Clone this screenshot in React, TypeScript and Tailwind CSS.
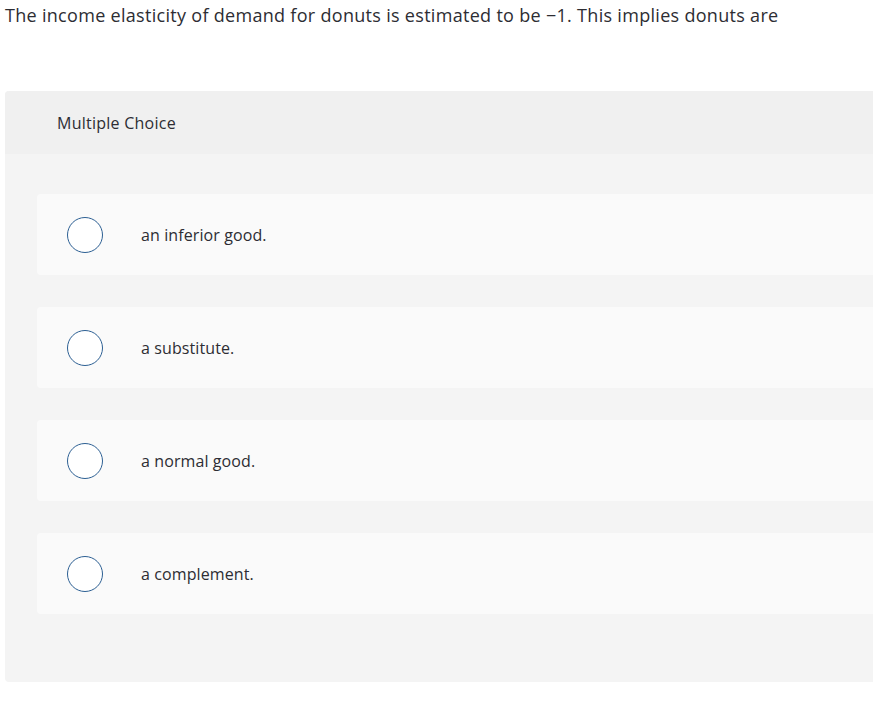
import React from "react";

const options = ["an inferior good.", "a substitute.", "a normal good.", "a complement."];

export default function App() {
  return (
    <div className="w-[873px] h-[727px] bg-white overflow-hidden" style={{ fontFamily: '"Open Sans", "Liberation Sans", sans-serif' }}>
      <p className="pl-[5px] pt-[2px] text-[18px] leading-[26px] text-[#2d2d33] tracking-[0.3px]">
        The income elasticity of demand for donuts is estimated to be −1. This implies donuts are
      </p>
      <div className="ml-[5px] mt-[63px] rounded-l-[4px] bg-[#f4f4f4] h-[591px]">
        <div className="h-[63px] bg-[#f0f0f0] rounded-tl-[4px] flex items-center pl-[52px] text-[16px] text-[#2d2d33] tracking-[0.25px]">
          Multiple Choice
        </div>
        <div className="pt-[40px] pl-[32px] flex flex-col gap-[32px]">
          {options.map((o) => (
            <div key={o} className="h-[81px] bg-[#fafafa] rounded-l-[4px] flex items-center">
              <div className="ml-[30px] w-[36px] h-[36px] rounded-full border-[1.5px] border-[#2c5f93] bg-white shrink-0" />
              <span className="ml-[38px] pt-[1px] text-[16px] text-[#2d2d33] tracking-[0.1px]">{o}</span>
            </div>
          ))}
        </div>
      </div>
    </div>
  );
}
